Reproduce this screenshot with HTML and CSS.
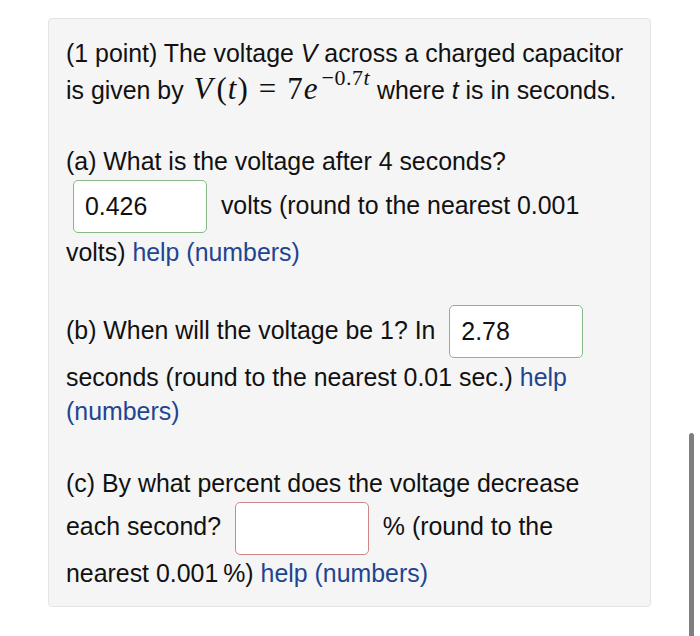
FILE: index.html
```html
<!DOCTYPE html>
<html lang="en">
<head>
<meta charset="utf-8">
<title>Capacitor voltage</title>
<link rel="stylesheet" href="styles.css">
</head>
<body>
<div class="page">
  <div class="card">
    <p class="para">(1 point) The voltage <i>V</i> across a charged capacitor is given by <span class="math"><span class="mi mi-v">V</span><span class="mo">(</span><span class="mi">t</span><span class="mo">)</span><span class="rel">=</span><span class="mn">7</span><span class="mi">e</span><sup class="sup"><span class="mn">−0.7</span><span class="mi">t</span></sup></span> where <i>t</i> is in seconds.</p>

    <p class="para para-a">(a) What is the voltage after 4 seconds? <input class="answer correct" type="text" value="0.426" readonly> volts (round to the nearest 0.001 volts) <a class="help" href="#">help (numbers)</a></p>

    <p class="para para-b">(b) When will the voltage be 1? In <input class="answer correct" type="text" value="2.78" readonly> seconds (round to the nearest 0.01 sec.) <a class="help" href="#">help (numbers)</a></p>

    <p class="para para-c">(c) By what percent does the voltage decrease each second? <input class="answer incorrect" type="text" value="" readonly> % (round to the nearest 0.001&#8201;%) <a class="help" href="#">help (numbers)</a></p>
  </div>
</div>
<div class="scrollbar"></div>
</body>
</html>
```

FILE: styles.css
```css
html, body {
  margin: 0;
  padding: 0;
  background: #ffffff;
}

body {
  font-family: "Liberation Sans", Arial, Helvetica, sans-serif;
  color: #111111;
}

.page {
  padding: 18px 0 0 48px;
}

.card {
  box-sizing: border-box;
  width: 603px;
  background: #f5f5f5;
  border: 1px solid #e4e4e4;
  border-radius: 4px;
  padding: 17px 17px 15px 17px;
  font-size: 24.9px;
  line-height: 34.2px;
}

.para {
  margin: 0;
}

.para-a {
  margin-top: 37px;
}

.para-b {
  margin-top: 35px;
}

.para-c {
  margin-top: 38px;
}

.math {
  font-family: "Liberation Serif", "Times New Roman", serif;
  font-size: 31px;
  line-height: 1;
  margin-left: 3px;
  letter-spacing: 1px;
}

.mi {
  font-style: italic;
}

.mi-v {
  margin-right: 3px;
}

.mo {
  font-style: normal;
}

.rel {
  margin: 0 10px;
}

.sup {
  font-size: 22px;
  line-height: 0.7;
  vertical-align: 14px;
  margin-left: 3px;
  letter-spacing: 0.5px;
}

.answer {
  box-sizing: border-box;
  width: 134px;
  height: 53px;
  margin: 1.5px 7px;
  padding: 0 11px;
  font-family: "Liberation Sans", Arial, Helvetica, sans-serif;
  font-size: 24.9px;
  color: #111111;
  background: #ffffff;
  border-radius: 5px;
  vertical-align: middle;
  outline: none;
}

.correct {
  border: 1.5px solid #88b888;
}

.incorrect {
  border: 1.5px solid #cc8888;
}

.help {
  color: #1f4590;
  text-decoration: none;
}

.scrollbar {
  position: fixed;
  left: 689px;
  top: 433px;
  width: 5px;
  height: 210px;
  background: #7f7f7f;
  border-radius: 3px;
}
```
